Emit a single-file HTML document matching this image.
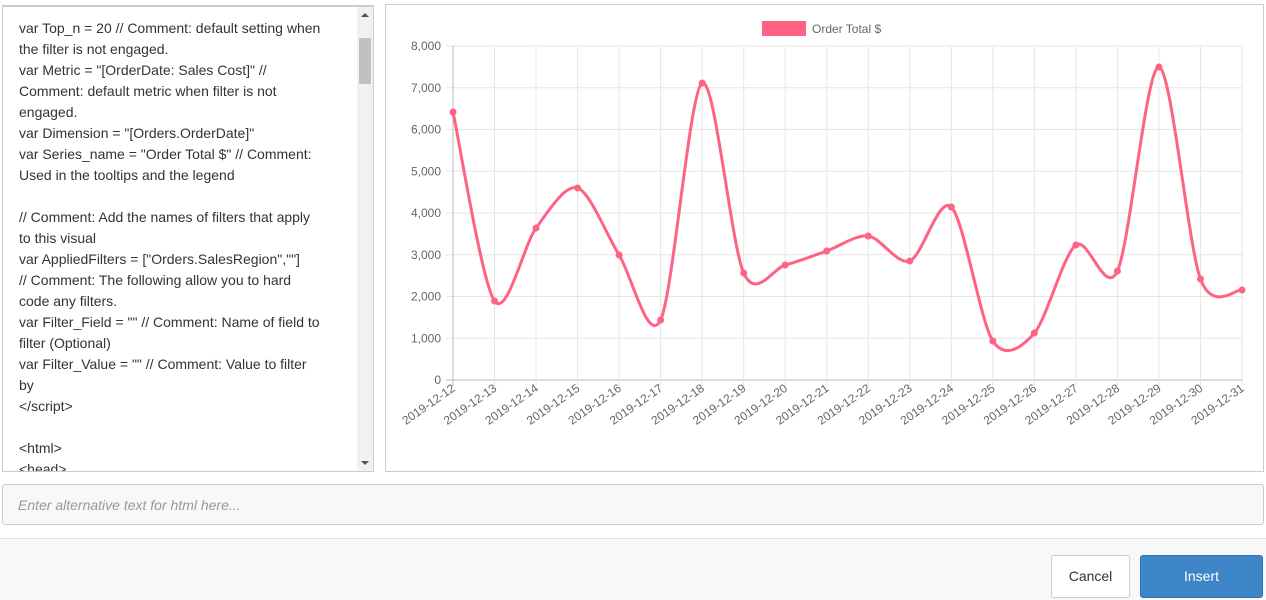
<!DOCTYPE html>
<html><head><meta charset="utf-8"><style>
*{box-sizing:border-box}
body{margin:0;width:1266px;height:600px;background:#fff;font-family:"Liberation Sans",Arial,sans-serif;position:relative;overflow:hidden;color:#333}
#code{position:absolute;left:2px;top:5px;width:372px;height:467px;border:1px solid #ccc;border-top:2px solid #ccc;overflow:hidden;background:#fff}
#code .t{position:absolute;left:16px;top:11px;width:340px;white-space:nowrap;font-size:14px;line-height:21px;color:#333}
#sb{position:absolute;right:0;top:0;width:16px;height:100%;background:#f1f1f1}
#thumb{position:absolute;left:2px;top:31px;width:12px;height:46px;background:#c1c1c1}
.arr{position:absolute;left:4px;width:0;height:0;border-left:4px solid transparent;border-right:4px solid transparent}
#chart{position:absolute;left:385px;top:4px;width:879px;height:468px;border:1px solid #ccc}
#alt{position:absolute;left:2px;top:484px;width:1262px;height:41px;border:1px solid #ccc;border-radius:3px;background:#f8f8f8;font-size:14px;font-style:italic;color:#999;padding:12px 15px}
#foot{position:absolute;left:0;top:538px;width:1266px;height:62px;background:#f8f8f8;border-top:1px solid #e5e5e5}
.btn{position:absolute;top:16px;height:43px;border-radius:3px;font-size:14px;text-align:center;line-height:41px}
#cancel{left:1051px;width:79px;background:#fff;border:1px solid #ccc;color:#333}
#insert{left:1140px;width:123px;background:#3d85c6;border:1px solid #2e74b5;color:#fff}
</style></head><body>
<div id="code"><div class="t">var Top_n = 20 // Comment: default setting when<br>the filter is not engaged.<br>var Metric = "[OrderDate: Sales Cost]" //<br>Comment: default metric when filter is not<br>engaged.<br>var Dimension = "[Orders.OrderDate]"<br>var Series_name = "Order Total $" // Comment:<br>Used in the tooltips and the legend<br><br>// Comment: Add the names of filters that apply<br>to this visual<br>var AppliedFilters = ["Orders.SalesRegion",""]<br>// Comment: The following allow you to hard<br>code any filters.<br>var Filter_Field = "" // Comment: Name of field to<br>filter (Optional)<br>var Filter_Value = "" // Comment: Value to filter<br>by<br>&lt;/script&gt;<br><br>&lt;html&gt;<br>&lt;head&gt;</div>
<div id="sb"><div class="arr" style="top:6px;border-bottom:4px solid #555"></div><div id="thumb"></div><div class="arr" style="bottom:6px;border-top:4px solid #555"></div></div></div>
<div id="chart"></div>
<svg style="position:absolute;left:0;top:0" width="1266" height="480" id="svg" font-family="Liberation Sans, Arial, sans-serif">
<rect x="762" y="21" width="44" height="15" fill="#ff6384"/>
<text x="812" y="33" font-size="12" fill="#666">Order Total $</text>
<g id="g"></g>
</svg>
<div id="alt">Enter alternative text for html here...</div>
<div id="foot"><div class="btn" id="cancel">Cancel</div><div class="btn" id="insert">Insert</div></div>
<script>
var g=document.getElementById('g'),s='';
var x0=453,dx=789/19,y0=380,k=41.75;
for(var i=0;i<=8;i++){var y=y0-i*k;s+='<line x1="446" x2="1243" y1="'+y+'" y2="'+y+'" stroke="'+(i==0?'#bbb':'#e6e6e6')+'"/>';
s+='<text x="441" y="'+(y+4)+'" font-size="12" fill="#666" text-anchor="end">'+(i?i+',000':'0')+'</text>';}
for(var i=0;i<20;i++){var x=x0+i*dx;s+='<line x1="'+x+'" x2="'+x+'" y1="46" y2="386" stroke="'+(i==0?'#bbb':'#e6e6e6')+'"/>';
s+='<text transform="translate('+(x+3)+',390) rotate(-35)" font-size="12" fill="#666" text-anchor="end">2019-12-'+(12+i)+'</text>';}
var v=[6419,1892,3640,4600,2994,1437,7114,2563,2754,3090,3449,2850,4144,934,1126,3234,2611,7497,2419,2156];
var P=v.map(function(a,i){return [x0+i*dx,y0-a*k/1000]});
var d='M'+P[0][0]+','+P[0][1],t=0.3;
for(var i=0;i<P.length-1;i++){var p0=P[i-1]||P[i],p1=P[i],p2=P[i+1],p3=P[i+2]||P[i+1];
var c1=[p1[0]+(p2[0]-p0[0])*t/2,p1[1]+(p2[1]-p0[1])*t/2],c2=[p2[0]-(p3[0]-p1[0])*t/2,p2[1]-(p3[1]-p1[1])*t/2];
d+=' C'+c1+' '+c2+' '+p2;}
s+='<path d="'+d+'" fill="none" stroke="#ff6384" stroke-width="3"/>';
P.forEach(function(p){s+='<circle cx="'+p[0]+'" cy="'+p[1]+'" r="3.5" fill="#ff6384"/>'});
g.innerHTML=s;
</script>
</body></html>
